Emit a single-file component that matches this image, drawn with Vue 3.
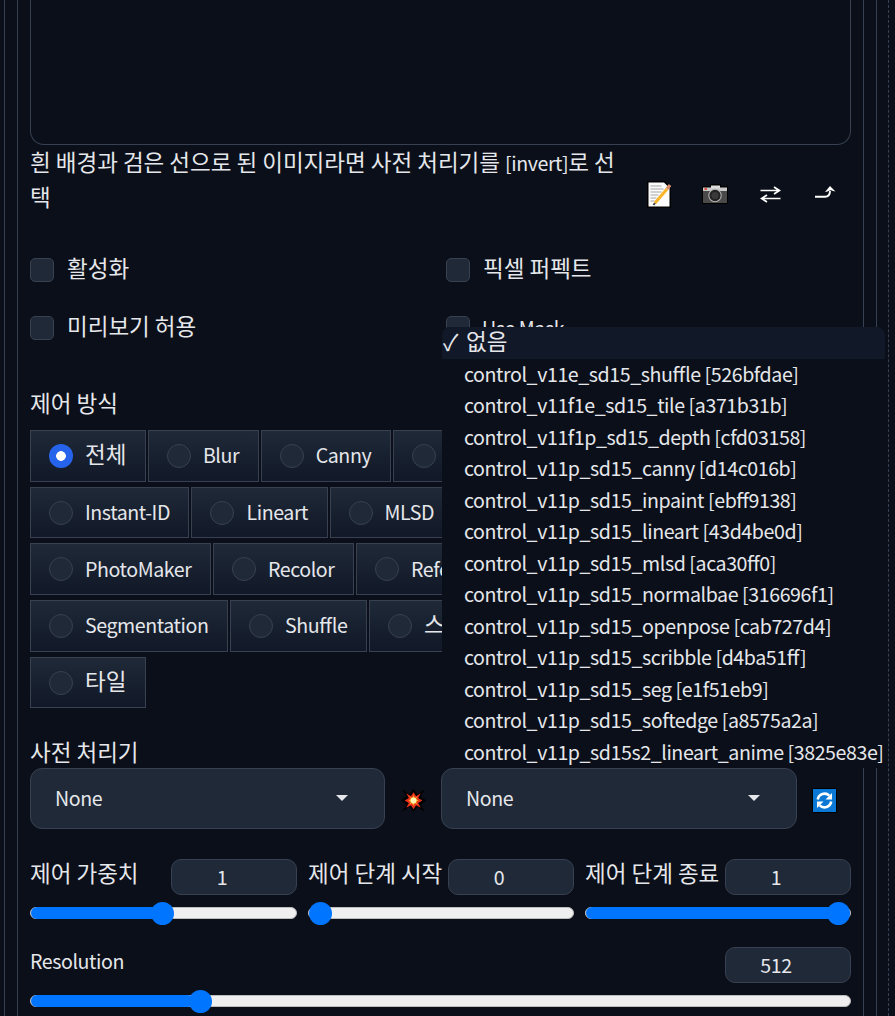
<script setup>
const radioRows = [
  ['전체', 'Blur', 'Canny', 'Depth'],
  ['Instant-ID', 'Lineart', 'MLSD'],
  ['PhotoMaker', 'Recolor', 'Reference'],
  ['Segmentation', 'Shuffle', '스케치'],
  ['타일'],
]
const models = [
  'control_v11e_sd15_shuffle [526bfdae]',
  'control_v11f1e_sd15_tile [a371b31b]',
  'control_v11f1p_sd15_depth [cfd03158]',
  'control_v11p_sd15_canny [d14c016b]',
  'control_v11p_sd15_inpaint [ebff9138]',
  'control_v11p_sd15_lineart [43d4be0d]',
  'control_v11p_sd15_mlsd [aca30ff0]',
  'control_v11p_sd15_normalbae [316696f1]',
  'control_v11p_sd15_openpose [cab727d4]',
  'control_v11p_sd15_scribble [d4ba51ff]',
  'control_v11p_sd15_seg [e1f51eb9]',
  'control_v11p_sd15_softedge [a8575a2a]',
  'control_v11p_sd15s2_lineart_anime [3825e83e]',
]
const sliders = [
  { label: '제어 가중치', value: '1', pct: 49.5 },
  { label: '제어 단계 시작', value: '0', pct: 0 },
  { label: '제어 단계 종료', value: '1', pct: 100 },
]
function thumbLeft(pct) {
  return { left: `calc(${pct}% - ${(pct / 100) * 23}px)` }
}
function fillWidth(pct) {
  return { width: `${pct}%` }
}
function isKorean(text) {
  return /[가-힣]/.test(text)
}
</script>

<template>
  <div class="page">
    <div class="frame-a">
      <div class="frame-b">
        <div class="frame-c">
          <div class="canvas-box"></div>

          <div class="hint-row">
            <p class="hint">흰 배경과 검은 선으로 된 이미지라면 사전 처리기를 <span class="lat">[invert]</span>로 선택</p>
            <div class="tools">
              <span class="tool-btn">
                <svg viewBox="0 0 24 27" width="24" height="27">
                  <path d="M0 0h18l6 6v21H0z" fill="#000" />
                  <path d="M1.500 1.500h15.500l5.500 5.500v18.500H1.500z" fill="#fbfbfb" />
                  <path d="M3.500 5h11M3.500 8h13M3.500 11h11M3.500 14h8M3.500 17h6M3.500 20h4" stroke="#a5a5a5" stroke-width="1" />
                  <path d="M8 22 L20 8" stroke="#f9b428" stroke-width="3" />
                  <path d="M20 8 L23 4" stroke="#d98d6a" stroke-width="3.200" />
                  <path d="M6.500 24 L8 22" stroke="#444" stroke-width="2" />
                </svg>
              </span>
              <span class="tool-btn">
                <svg viewBox="0 0 26 20" width="26" height="20">
                  <rect x="0" y="2" width="26" height="18" fill="#000" />
                  <rect x="8" y="0" width="11" height="3" fill="#000" />
                  <rect x="1" y="7" width="24" height="12" fill="#4a4a4a" />
                  <rect x="1" y="3.500" width="24" height="3.500" fill="#c9c9c9" />
                  <rect x="9" y="1.500" width="9" height="3" fill="#dcdcdc" />
                  <rect x="2.500" y="4" width="2.500" height="2" fill="#e0503f" />
                  <circle cx="13" cy="11.500" r="6.200" fill="#222" stroke="#b5b5b5" stroke-width="1.100" />
                  <circle cx="13" cy="11.500" r="3.600" fill="#3a3a3a" />
                </svg>
              </span>
              <span class="tool-btn">
                <svg viewBox="0 0 21 17" width="21" height="17">
                  <path d="M0.500 4.500h18M14 1l5.500 3.500L14 8" fill="none" stroke="#fff" stroke-width="1.700" />
                  <path d="M20.500 12.500h-18M7 9l-5.500 3.500L7 16" fill="none" stroke="#fff" stroke-width="1.700" />
                </svg>
              </span>
              <span class="tool-btn arrow-up">
                <svg viewBox="0 0 21 13" width="21" height="13">
                  <path d="M0 10.800h10c4 0 5-2 5-6" fill="none" stroke="#fff" stroke-width="1.900" />
                  <path d="M10 6L15 0l5.500 5.500-2.500-.5-2.500-1-3 1.500z" fill="#fff" />
                </svg>
              </span>
            </div>
          </div>

          <div class="checks">
            <label class="check"><span class="box"></span><span class="ko">활성화</span></label>
            <label class="check"><span class="box"></span><span class="ko">픽셀 퍼펙트</span></label>
            <label class="check"><span class="box"></span><span class="ko">미리보기 허용</span></label>
            <label class="check"><span class="box"></span><span class="lat mask">Use Mask</span></label>
          </div>

          <div class="section-label method-label">제어 방식</div>
          <div class="radios">
            <div v-for="(row, r) in radioRows" :key="r" class="radio-row">
              <div v-for="item in row" :key="item" class="radio-btn">
                <span class="dot" :class="{ on: item === '전체' }"></span>
                <span :class="isKorean(item) ? 'ko' : 'lat radio-lat'">{{ item }}</span>
              </div>
            </div>
          </div>

          <div class="section-label pre-label">사전 처리기</div>
          <div class="selects">
            <div class="select lat"><span>None</span><i class="caret"></i></div>
            <svg class="burst" viewBox="0 0 24 24" width="25" height="25">
              <path d="M1 1 L8 6 L12 1 L16 6 L23 1 L19 8 L24 12 L19 16 L23 23 L16 18 L12 23 L8 18 L1 23 L5 16 L0 12 L5 8 Z" fill="#000" />
              <path d="M5 5 L9.500 8 L12 4 L14.500 8 L19 5 L16.500 9.500 L20.500 12 L16.500 14.500 L19 19 L14.500 16.500 L12 20.500 L9.500 16.500 L5 19 L7.500 14.500 L3.500 12 L7.500 9.500 Z" fill="#e8321b" />
              <path d="M8 8 L10.500 9.500 L12 7 L13.500 9.500 L16 8 L14.500 10.500 L17 12 L14.500 13.500 L16 16 L13.500 14.500 L12 17 L10.500 14.500 L8 16 L9.500 13.500 L7 12 L9.500 10.500 Z" fill="#ffa51f" />
              <circle cx="12" cy="12" r="2.800" fill="#fff3b0" />
            </svg>
            <div class="select second lat"><span>None</span><i class="caret"></i></div>
            <svg class="refresh" viewBox="0 0 25 25" width="25" height="25">
              <rect x="0" y="0" width="25" height="25" fill="#000" />
              <rect x="1" y="1" width="23" height="23" fill="#0a78d4" />
              <path d="M5.800 11.500a6.800 6.800 0 0 1 11.500-3.800" fill="none" stroke="#fff" stroke-width="2.600" />
              <path d="M19.200 13.500a6.800 6.800 0 0 1-11.500 3.800" fill="none" stroke="#fff" stroke-width="2.600" />
              <path d="M20 5v6.500h-6.500z M5 20v-6.500h6.500z" fill="#fff" />
            </svg>
          </div>

          <div class="slider-row">
            <div v-for="s in sliders" :key="s.label" class="slider-cell">
              <div class="slider-head">
                <span>{{ s.label }}</span>
                <span class="num lat">{{ s.value }}</span>
              </div>
              <div class="track">
                <div class="fill" :style="fillWidth(s.pct)"></div>
                <div class="thumb" :style="thumbLeft(s.pct)"></div>
              </div>
            </div>
          </div>

          <div class="slider-cell resolution">
            <div class="slider-head">
              <span class="lat res-label">Resolution</span>
              <span class="num lat">512</span>
            </div>
            <div class="track">
              <div class="fill" :style="fillWidth(19.900)"></div>
              <div class="thumb" :style="thumbLeft(19.900)"></div>
            </div>
          </div>
        </div>
      </div>
    </div>

    <ul class="menu">
      <li class="menu-item selected"><span class="tick">✓</span><span class="none-ko">없음</span></li>
      <li v-for="m in models" :key="m" class="menu-item lat">{{ m }}</li>
    </ul>
  </div>
</template>

<style>
html, body { margin: 0; background: #0b0f19; }
</style>

<style scoped>
.page {
  position: relative;
  width: 895px;
  height: 1016px;
  overflow: hidden;
  background: #0b0f19;
  color: #e5e7eb;
  font-family: "Noto Sans CJK KR", "Noto Sans", sans-serif;
  font-size: 22.500px;
}
.lat {
  font-size: 19.600px;
  letter-spacing: -0.420px;
  font-feature-settings: "liga" 1;
}
.ko {
  position: relative;
  top: -3px;
}
.frame-a {
  box-sizing: border-box;
  margin-left: 4px;
  width: 885px;
  height: 1016px;
  padding-left: 12px;
  border-left: 1px solid #374151;
  border-right: 1px dashed #374151;
}
.frame-b {
  box-sizing: border-box;
  width: 860px;
  height: 100%;
  padding-left: 12px;
  padding-right: 12px;
  border-left: 1px solid #374151;
  border-right: 1px solid #374151;
}
.frame-c {
  box-sizing: border-box;
  height: 100%;
  padding-right: 12px;
  border-right: 1px solid #374151;
}
.canvas-box {
  box-sizing: border-box;
  height: 145px;
  border: 1px solid #374151;
  border-top: none;
  border-radius: 0 0 14px 14px;
}
.hint-row {
  display: flex;
  align-items: flex-start;
  justify-content: space-between;
  height: 113px;
}
.hint {
  margin: 0;
  width: 600px;
  line-height: 33.500px;
}
.tools {
  display: flex;
  align-items: center;
  margin-top: 34px;
  margin-right: -2px;
  height: 30px;
}
.tool-btn {
  width: 55.300px;
  display: flex;
  justify-content: center;
  align-items: center;
}
.arrow-up {
  margin-top: -4px;
}
.checks {
  display: grid;
  grid-template-columns: 416px 1fr;
  row-gap: 34px;
}
.check {
  display: flex;
  align-items: center;
  gap: 13px;
  height: 24px;
  line-height: 24px;
}
.mask {
  margin-left: -1px;
}
.box {
  box-sizing: border-box;
  width: 24px;
  height: 24px;
  border: 1px solid #374151;
  border-radius: 5px;
  background: #1f2937;
  flex: none;
}
.section-label {
  line-height: 26px;
}
.method-label {
  margin-top: 49px;
}
.radios {
  display: flex;
  flex-direction: column;
  gap: 5px;
  margin-top: 15px;
  width: 821px;
  overflow: hidden;
}
.radio-row {
  display: flex;
  gap: 2px;
  white-space: nowrap;
}
.radio-btn {
  box-sizing: border-box;
  display: flex;
  align-items: center;
  gap: 12px;
  height: 51.700px;
  padding: 0 18.500px 0 18px;
  border: 1px solid #374151;
  background: linear-gradient(to bottom, #1f2937, #111827);
}
.radio-lat {
  margin-bottom: 2px;
}
.dot {
  box-sizing: border-box;
  width: 24px;
  height: 24px;
  border: 1px solid #374151;
  border-radius: 50%;
  background: #1f2937;
  flex: none;
}
.dot.on {
  border: none;
  background: radial-gradient(circle, #fff 0, #fff 4.500px, #2563eb 5.200px);
}
.pre-label {
  margin-top: 30px;
}
.selects {
  display: flex;
  align-items: center;
  margin-top: 4px;
}
.select {
  box-sizing: border-box;
  width: 355px;
  height: 61px;
  display: flex;
  align-items: center;
  justify-content: space-between;
  padding: 0 36px 2px 24px;
  background: #1f2937;
  border: 1px solid #374151;
  border-radius: 12px;
  flex: none;
}
.select.second {
  width: 356px;
}
.caret {
  width: 0;
  height: 0;
  border-left: 6px solid transparent;
  border-right: 6px solid transparent;
  border-top: 6px solid #e5e7eb;
}
.burst {
  flex: none;
  margin: 4px 15px 0 16px;
}
.refresh {
  flex: none;
  margin: 4px 0 0 15px;
}
.slider-row {
  display: grid;
  grid-template-columns: 267px 266px 266px;
  column-gap: 11px;
  margin-top: 30px;
}
.slider-head {
  display: flex;
  justify-content: space-between;
  align-items: flex-start;
  height: 36px;
  line-height: 26px;
}
.num {
  box-sizing: border-box;
  width: 126px;
  height: 36px;
  line-height: 34px;
  text-align: center;
  background: #1f2937;
  border: 1px solid #374151;
  border-radius: 10px;
  padding-right: 24px;
  white-space: nowrap;
}
.track {
  position: relative;
  height: 12px;
  margin-top: 12px;
  background: #efefef;
  border-radius: 6px;
  border: 1px solid #bdbdbd;
  box-sizing: border-box;
}
.fill {
  position: absolute;
  left: 0;
  top: -1px;
  bottom: -1px;
  background: #0075ff;
  border-radius: 6px;
}
.thumb {
  position: absolute;
  top: -6.500px;
  width: 23px;
  height: 23px;
  border-radius: 50%;
  background: #0075ff;
}
.resolution {
  margin-top: 28px;
}
.res-label {
  line-height: 28px;
}
.menu {
  position: absolute;
  left: 442px;
  top: 327px;
  width: 443px;
  margin: 0;
  padding: 0;
  list-style: none;
  background: #0b0f19;
  border-radius: 8px 8px 0 0;
}
.menu-item {
  box-sizing: border-box;
  height: 31.500px;
  line-height: 29.500px;
  padding-left: 22px;
  white-space: nowrap;
  position: relative;
}
.selected {
  background: #111827;
  border-radius: 8px 8px 0 0;
  line-height: 31.500px;
}
.none-ko {
  position: relative;
  left: 2px;
  top: -2px;
}
.tick {
  position: absolute;
  left: 1px;
  top: -1px;
}
</style>
